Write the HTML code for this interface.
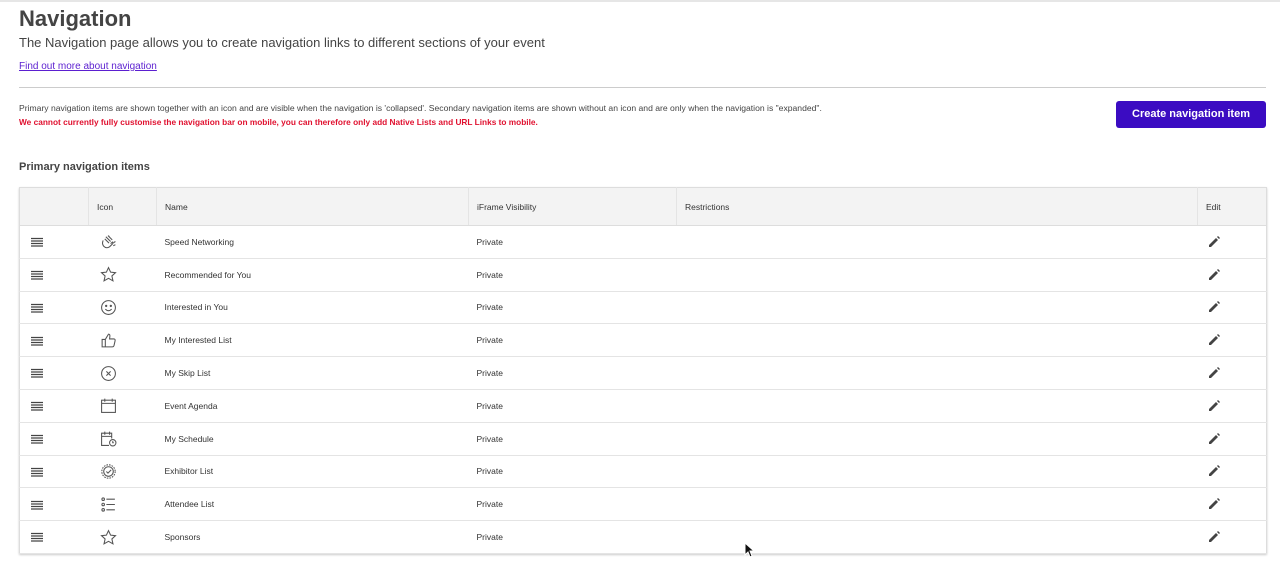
<!DOCTYPE html>
<html><head><style>
body{margin:0;width:1280px;height:564px;background:#fff;font-family:"Liberation Sans",sans-serif;color:#333;overflow:hidden;position:relative}
.topline{position:absolute;top:0;left:0;right:0;height:2px;background:#e6e6e6}
h1{position:absolute;left:19px;top:6px;margin:0;font-size:22px;font-weight:bold;color:#444}
.sub{position:absolute;left:19px;top:35px;font-size:13px;color:#444}
a{position:absolute;left:19px;top:61px;font-size:10px;color:#5b1fd0;text-decoration:underline}
.hr{position:absolute;left:19px;width:1247px;top:87px;height:1px;background:#ccc}
.p1{position:absolute;left:19px;top:103px;font-size:8.6px;color:#444;white-space:nowrap}
.p2{position:absolute;left:19px;top:117px;font-size:8.3px;color:#e0102f;font-weight:bold;white-space:nowrap}
.btn{position:absolute;left:1116px;top:101px;width:150px;height:27px;background:#3b0cc2;border-radius:3px;color:#fff;font-size:11px;font-weight:bold;text-align:center;line-height:27px}
.h2{position:absolute;left:19px;top:161px;font-size:11px;font-weight:bold;color:#444}
table{position:absolute;left:19px;top:187px;width:1248px;table-layout:fixed;border-collapse:collapse;font-size:8.5px;color:#333;border:1px solid #ddd;box-shadow:0 1px 2px #ccc}
th{background:#f3f3f3;height:38px;text-align:left;font-weight:normal;padding:0 8px;border-left:1px solid #e4e4e4;border-bottom:1px solid #ddd;box-sizing:border-box}
td{height:32.8px;padding:0 8px;border-bottom:1px solid #e4e4e4;box-sizing:border-box}
td.d{padding-left:11px}
.cur{position:absolute;left:744px;top:542px}
</style></head><body>
<div class="topline"></div>
<h1>Navigation</h1>
<div class="sub">The Navigation page allows you to create navigation links to different sections of your event</div>
<a>Find out more about navigation</a>
<div class="hr"></div>
<div class="p1">Primary navigation items are shown together with an icon and are visible when the navigation is 'collapsed'. Secondary navigation items are shown without an icon and are only when the navigation is "expanded".</div>
<div class="p2">We cannot currently fully customise the navigation bar on mobile, you can therefore only add Native Lists and URL Links to mobile.</div>
<div class="btn">Create navigation item</div>
<div class="h2">Primary navigation items</div>
<table>
<colgroup><col style="width:69px"><col style="width:68px"><col style="width:312px"><col style="width:208px"><col style="width:521px"><col></colgroup>
<tr><th style="border-left:0"></th><th>Icon</th><th>Name</th><th>iFrame Visibility</th><th>Restrictions</th><th>Edit</th></tr>
<tbody id="b"></tbody>
</table>
<svg class="cur" width="12" height="16" viewBox="0 0 12 16"><path d="M1 1v12l3-3 2 5 2-1-2-5h4z" fill="#111" stroke="#fff" stroke-width="1"/></svg>
<script>
var rows=[["Speed Networking","wave"],["Recommended for You","star"],["Interested in You","smile"],["My Interested List","thumb"],["My Skip List","x"],["Event Agenda","cal"],["My Schedule","calc"],["Exhibitor List","badge"],["Attendee List","list"],["Sponsors","star"]];
var ic={
star:'<path d="M8 1.5l2 4.3 4.6.5-3.4 3.1 1 4.6L8 11.6 3.8 14l1-4.6L1.4 6.3 6 5.8z"/>',
smile:'<circle cx="8" cy="8" r="6.5"/><circle cx="5.8" cy="6.5" r=".6" fill="#555"/><circle cx="10.2" cy="6.5" r=".6" fill="#555"/><path d="M5 9.5q3 3 6 0"/>',
thumb:'<path d="M2 7h3v7H2zM5 7l3-5q1.5 0 1.3 2L9 6.5h4q1.5.2 1.2 1.7l-1 4.5q-.4 1.3-1.7 1.3H5"/>',
x:'<circle cx="8" cy="8" r="6.5"/><path d="M6 6l4 4M10 6l-4 4"/>',
cal:'<rect x="1.5" y="3" width="13" height="11.5"/><path d="M1.5 6h13M4.5 1.5v3M11.5 1.5v3"/>',
calc:'<path d="M11 8V3H1.5v11.5h7"/><path d="M1.5 6h9.5M4.5 1.5v3M9 1.5v3"/><circle cx="12" cy="12" r="3"/><path d="M12 10.5V12h1"/>',
badge:'<circle cx="8" cy="8" r="6.3" stroke-dasharray="1.5 1"/><circle cx="8" cy="8" r="4.5"/><path d="M6 8l1.5 1.5L10.5 6.5"/>',
list:'<circle cx="3" cy="3" r="1.2"/><circle cx="3" cy="8" r="1.2"/><circle cx="3" cy="13" r="1.2"/><path d="M6 3h8M6 8h8M6 13h8"/>',
wave:'<path d="M3 7q-1.5 3 .5 5.5q2.5 2.5 5.5.5l3-3q.8-1-.2-1.5L10 10M4.5 5.5l4 4M5.5 3.5l4.5 4.5M7.5 2.5l4 4M9 4L8 2.5M13 9l1.5-1M12.5 12l2-1"/>'};
var h='';rows.forEach(function(r){h+='<tr><td class="d"><svg width="12" height="10" style="vertical-align:middle"><path d="M0 1.5h12M0 4h12M0 6.5h12M0 9h12" stroke="#444" stroke-width="1.2"/></svg></td><td><svg width="17" height="17" viewBox="0 0 16 16" fill="none" stroke="#555" stroke-width="1" style="vertical-align:middle;margin-left:3px">'+ic[r[1]]+'</svg></td><td>'+r[0]+'</td><td>Private</td><td></td><td><svg width="14" height="14" viewBox="0 0 14 14" style="vertical-align:middle;margin-left:1px"><path d="M2 10l7-7 2 2-7 7H2z" fill="#444"/><path d="M10 2l1-1 2 2-1 1z" fill="#444"/></svg></td></tr>'});
document.getElementById('b').innerHTML=h;
</script>
</body></html>
